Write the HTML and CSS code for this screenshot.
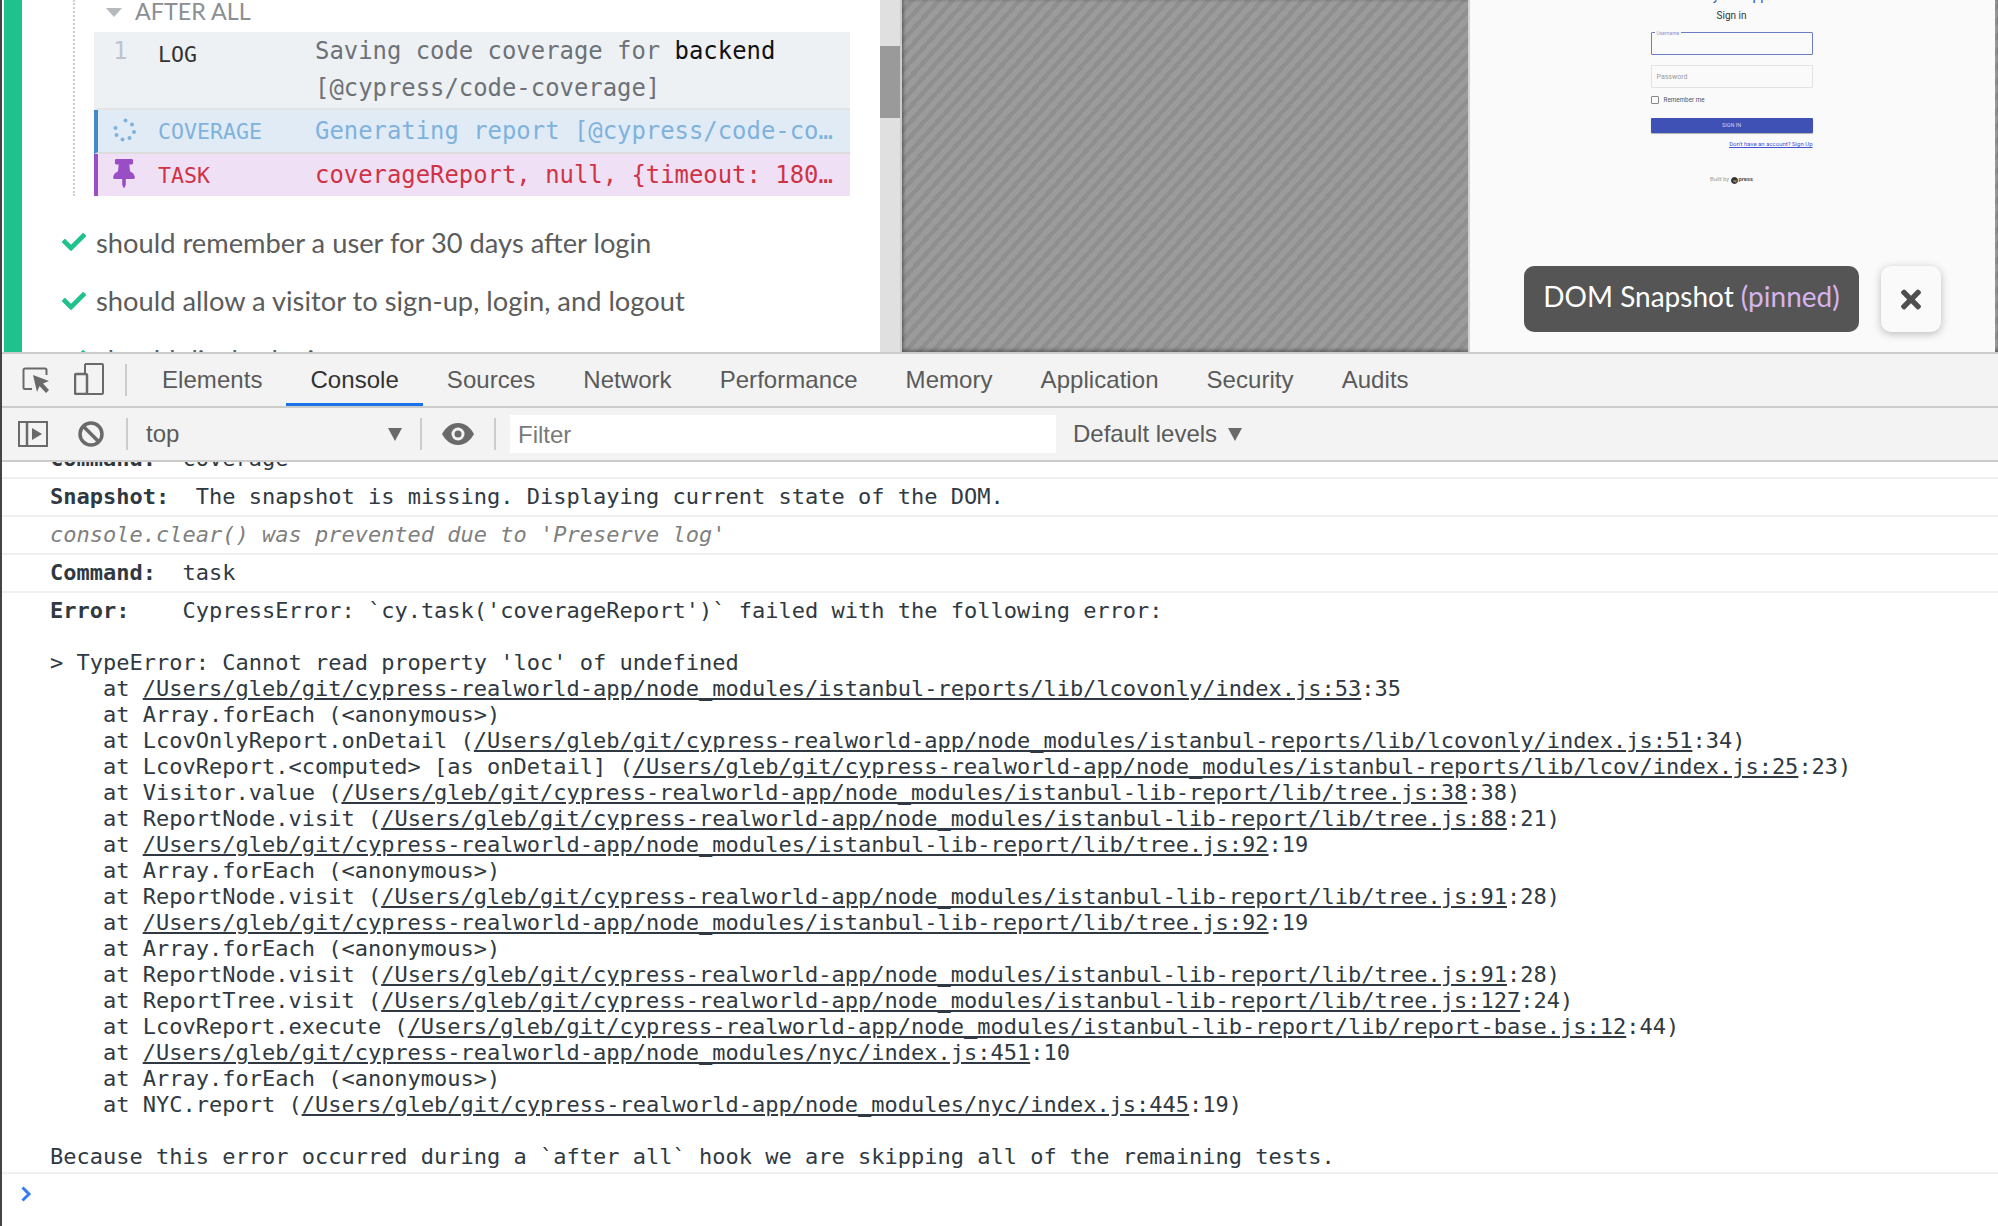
FILE: index.html
```html
<!DOCTYPE html>
<html lang="en">
<head>
<meta charset="utf-8">
<title>Cypress runner with DevTools console</title>
<link rel="stylesheet" href="styles.css">
</head>
<body>
<div class="app">
  <section class="top">
    <div class="reporter">
      <div class="stripe"></div>
      <div class="runnables">
        <div class="hook">
          <div class="hook-head"><span class="caret"></span><span class="hook-name">AFTER ALL</span></div>
          <div class="cmd cmd-log">
            <span class="cmd-num">1</span>
            <span class="cmd-label">LOG</span>
            <span class="cmd-msg wrap">Saving code coverage for <b>backend</b><br>[@cypress/code-coverage]</span>
          </div>
          <div class="cmd cmd-cov">
            <span class="cmd-num">
              <svg class="spin" viewBox="0 0 24 24" width="24" height="24"><g fill="#7fb2dd"><circle cx="12.5" cy="2.5" r="2"/><circle cx="19" cy="6.5" r="2"/><circle cx="21" cy="14" r="2"/><circle cx="16.5" cy="20" r="2"/><circle cx="9.5" cy="21.5" r="2"/><circle cx="3.5" cy="17" r="2"/><circle cx="2.5" cy="10" r="2"/></g></svg>
            </span>
            <span class="cmd-label">COVERAGE</span>
            <span class="cmd-msg">Generating report [@cypress/code-coverage]</span>
          </div>
          <div class="cmd cmd-task">
            <span class="cmd-num">
              <svg class="pin" viewBox="0 0 384 512" width="22" height="29"><path fill="#9a4ec5" d="M298.028 214.267L285.793 96H328c13.255 0 24-10.745 24-24V24c0-13.255-10.745-24-24-24H56C42.745 0 32 10.745 32 24v48c0 13.255 10.745 24 24 24h42.207L85.972 214.267C37.465 236.82 0 277.261 0 328c0 13.255 10.745 24 24 24h136v104.007c0 1.242.289 2.467.845 3.578l24 48c2.941 5.882 11.364 5.893 14.311 0l24-48a8.008 8.008 0 0 0 .845-3.578V352h136c13.255 0 24-10.745 24-24-.001-51.183-37.983-91.42-85.973-113.733z"/></svg>
            </span>
            <span class="cmd-label">TASK</span>
            <span class="cmd-msg">coverageReport, null, {timeout: 180000}</span>
          </div>
        </div>
        <div class="test"><svg class="tick" viewBox="0 0 512 512" width="24" height="24"><path fill="#1fc28d" d="M173.898 439.404l-166.4-166.4c-9.997-9.997-9.997-26.206 0-36.204l36.203-36.204c9.997-9.998 26.207-9.998 36.204 0L192 312.69 432.095 72.596c9.997-9.997 26.207-9.997 36.204 0l36.203 36.204c9.997 9.997 9.997 26.206 0 36.204l-294.4 294.401c-9.998 9.997-26.207 9.997-36.204-.001z"/></svg><span>should remember a user for 30 days after login</span></div>
        <div class="test"><svg class="tick" viewBox="0 0 512 512" width="24" height="24"><path fill="#1fc28d" d="M173.898 439.404l-166.4-166.4c-9.997-9.997-9.997-26.206 0-36.204l36.203-36.204c9.997-9.998 26.207-9.998 36.204 0L192 312.69 432.095 72.596c9.997-9.997 26.207-9.997 36.204 0l36.203 36.204c9.997 9.997 9.997 26.206 0 36.204l-294.4 294.401c-9.998 9.997-26.207 9.997-36.204-.001z"/></svg><span>should allow a visitor to sign-up, login, and logout</span></div>
        <div class="test"><svg class="tick" viewBox="0 0 512 512" width="24" height="24"><path fill="#1fc28d" d="M173.898 439.404l-166.4-166.4c-9.997-9.997-9.997-26.206 0-36.204l36.203-36.204c9.997-9.998 26.207-9.998 36.204 0L192 312.69 432.095 72.596c9.997-9.997 26.207-9.997 36.204 0l36.203 36.204c9.997 9.997 9.997 26.206 0 36.204l-294.4 294.401c-9.998 9.997-26.207 9.997-36.204-.001z"/></svg><span>should display login errors</span></div>
      </div>
      <div class="scroll"><div class="thumb"></div></div>
    </div>
    <div class="stage">
      <div class="aut">
        <div class="aut-logo"><span>Pay BS App</span></div>
        <div class="aut-title">Sign in</div>
        <div class="aut-form">
          <div class="field field-focus"><span class="field-float">Username</span></div>
          <div class="field"><span class="field-hint">Password</span></div>
          <div class="remember"><span class="check-box"></span><span>Remember me</span></div>
          <div class="signin">SIGN IN</div>
          <div class="signup"><span>Don't have an account? Sign Up</span></div>
          <div class="built">Built by <span class="cy-ring">cy</span><span class="cy-word">press</span></div>
        </div>
        <div class="snap">
          <div class="snap-label">DOM Snapshot <span class="snap-pin">(pinned)</span></div>
          <div class="snap-close"><svg viewBox="0 0 352 512" width="20" height="29"><path fill="#4f4f4f" d="M242.72 256l100.07-100.07c12.28-12.28 12.28-32.19 0-44.48l-22.24-22.24c-12.28-12.28-32.19-12.28-44.48 0L176 189.28 75.93 89.21c-12.28-12.28-32.19-12.28-44.48 0L9.21 111.45c-12.28 12.28-12.28 32.19 0 44.48L109.28 256 9.21 356.07c-12.28 12.28-12.28 32.19 0 44.48l22.24 22.24c12.28 12.28 32.2 12.28 44.48 0L176 322.72l100.07 100.07c12.28 12.28 32.2 12.28 44.48 0l22.24-22.24c12.28-12.28 12.28-32.19 0-44.48L242.72 256z"/></svg></div>
        </div>
      </div>
    </div>
  </section>

  <section class="devtools">
    <div class="tabbar">
      <div class="tool-icons">
        <svg class="icon-inspect" viewBox="0 0 28 26" width="28" height="26"><path d="M10 22H3a1.500 1.500 0 0 1-1.500-1.500V3A1.500 1.500 0 0 1 3 1.500h20A1.500 1.500 0 0 1 24.500 3v5" fill="none" stroke="#6a6a6a" stroke-width="2"/><path fill="#6a6a6a" d="M11 8l16 6-6 2.500 6 6.500-3 3-6.500-7-2.500 6z"/></svg>
        <svg class="icon-device" viewBox="0 0 30 32" width="30" height="32"><path d="M11 1h17a1 1 0 0 1 1 1v28a1 1 0 0 1-1 1H13" fill="none" stroke="#6a6a6a" stroke-width="2"/><path d="M11 1v10" fill="none" stroke="#6a6a6a" stroke-width="2"/><rect x="1" y="11" width="12" height="20" rx="1.500" fill="none" stroke="#6a6a6a" stroke-width="2.500"/></svg>
      </div>
      <span class="vsep vsep-tools"></span>
      <nav class="tabs">
        <span class="tab">Elements</span>
        <span class="tab tab-active">Console</span>
        <span class="tab">Sources</span>
        <span class="tab">Network</span>
        <span class="tab">Performance</span>
        <span class="tab">Memory</span>
        <span class="tab">Application</span>
        <span class="tab">Security</span>
        <span class="tab">Audits</span>
      </nav>
    </div>
    <div class="consolebar">
      <svg class="icon-side" viewBox="0 0 30 26" width="30" height="26"><rect x="1" y="1" width="28" height="24" fill="none" stroke="#6a6a6a" stroke-width="2"/><path d="M9 1v24" stroke="#6a6a6a" stroke-width="2.500"/><path fill="#6a6a6a" d="M14 7l10 6-10 6z"/></svg>
      <svg class="icon-block" viewBox="0 0 26 26" width="26" height="26"><circle cx="13" cy="13" r="11" fill="none" stroke="#6a6a6a" stroke-width="3.500"/><path d="M5.500 5.500l15 15" stroke="#6a6a6a" stroke-width="3.500"/></svg>
      <span class="vsep vsep-block"></span>
      <div class="ctx"><span>top</span><span class="tri"></span></div>
      <span class="vsep"></span>
      <svg class="icon-eye" viewBox="0 0 32 22" width="32" height="22"><path fill="#6a6a6a" d="M16 0C9 0 3.500 4.500 0 11c3.500 6.500 9 11 16 11s12.500-4.500 16-11C28.500 4.500 23 0 16 0z"/><circle cx="16" cy="11" r="6.500" fill="#f3f3f3"/><circle cx="16" cy="11" r="3.500" fill="#6a6a6a"/></svg>
      <span class="vsep"></span>
      <div class="filter">Filter</div>
      <div class="levels"><span>Default levels</span><span class="tri"></span></div>
    </div>
    <div class="console">
      <div class="row row-clip"><b>Command:</b>  coverage</div>
      <div class="row"><b>Snapshot:</b>  The snapshot is missing. Displaying current state of the DOM.</div>
      <div class="row row-note">console.clear() was prevented due to 'Preserve log'</div>
      <div class="row"><b>Command:</b>  task</div>
      <div class="row row-long"><b>Error:</b>    CypressError: `cy.task('coverageReport')` failed with the following error:

&gt; TypeError: Cannot read property 'loc' of undefined
    at <a>/Users/gleb/git/cypress-realworld-app/node_modules/istanbul-reports/lib/lcovonly/index.js:53</a>:35
    at Array.forEach (&lt;anonymous&gt;)
    at LcovOnlyReport.onDetail (<a>/Users/gleb/git/cypress-realworld-app/node_modules/istanbul-reports/lib/lcovonly/index.js:51</a>:34)
    at LcovReport.&lt;computed&gt; [as onDetail] (<a>/Users/gleb/git/cypress-realworld-app/node_modules/istanbul-reports/lib/lcov/index.js:25</a>:23)
    at Visitor.value (<a>/Users/gleb/git/cypress-realworld-app/node_modules/istanbul-lib-report/lib/tree.js:38</a>:38)
    at ReportNode.visit (<a>/Users/gleb/git/cypress-realworld-app/node_modules/istanbul-lib-report/lib/tree.js:88</a>:21)
    at <a>/Users/gleb/git/cypress-realworld-app/node_modules/istanbul-lib-report/lib/tree.js:92</a>:19
    at Array.forEach (&lt;anonymous&gt;)
    at ReportNode.visit (<a>/Users/gleb/git/cypress-realworld-app/node_modules/istanbul-lib-report/lib/tree.js:91</a>:28)
    at <a>/Users/gleb/git/cypress-realworld-app/node_modules/istanbul-lib-report/lib/tree.js:92</a>:19
    at Array.forEach (&lt;anonymous&gt;)
    at ReportNode.visit (<a>/Users/gleb/git/cypress-realworld-app/node_modules/istanbul-lib-report/lib/tree.js:91</a>:28)
    at ReportTree.visit (<a>/Users/gleb/git/cypress-realworld-app/node_modules/istanbul-lib-report/lib/tree.js:127</a>:24)
    at LcovReport.execute (<a>/Users/gleb/git/cypress-realworld-app/node_modules/istanbul-lib-report/lib/report-base.js:12</a>:44)
    at <a>/Users/gleb/git/cypress-realworld-app/node_modules/nyc/index.js:451</a>:10
    at Array.forEach (&lt;anonymous&gt;)
    at NYC.report (<a>/Users/gleb/git/cypress-realworld-app/node_modules/nyc/index.js:445</a>:19)

Because this error occurred during a `after all` hook we are skipping all of the remaining tests.</div>
      <div class="prompt"><svg viewBox="0 0 12 16" width="12" height="16"><path d="M2.500 1.500L9 8l-6.500 6.500" fill="none" stroke="#367cf1" stroke-width="3"/></svg></div>
    </div>
  </section>
</div>
</body>
</html>
```
FILE: styles.css
```css
* { box-sizing: border-box; }
html, body { margin: 0; height: 100%; background: #fff; overflow: hidden; }

.app {
  width: 1998px;
  height: 1226px;
  display: flex;
  flex-direction: column;
  border-left: 2px solid #444;
  overflow: hidden;
}

/* ---------- top: Cypress runner ---------- */
.top {
  height: 354px;
  flex: none;
  display: flex;
  border-bottom: 2px solid #ccc;
  overflow: hidden;
}
.reporter {
  width: 900px;
  flex: none;
  display: flex;
  background: #fff;
  font-family: Lato, "Noto Sans", sans-serif;
}
.stripe {
  width: 18px;
  margin-left: 2px;
  flex: none;
  background: #1fc28d;
}
.runnables { flex: 1; min-width: 0; overflow: hidden; }
.scroll {
  width: 22px;
  flex: none;
  background: #e0e0e0;
  border-right: 2px solid #cdcdcd;
  padding-top: 46px;
}
.thumb { height: 72px; background: #9a9a9a; }

.hook {
  margin-left: 51px;
  padding-left: 19px;
  width: 780px;
  margin-bottom: 17px;
  border-left: 2px dotted #cfcfcf;
}
.hook-head { height: 32px; display: flex; align-items: center; }
.caret {
  width: 0;
  height: 0;
  margin-left: 12px;
  border-left: 8px solid transparent;
  border-right: 8px solid transparent;
  border-top: 9px solid #b5b9bd;
  margin-top: -8px;
}
.hook-name {
  margin-left: 13px;
  margin-top: -10px;
  font-size: 23.300px;
  color: #8c8f93;
}

.cmd {
  display: grid;
  grid-template-columns: 60px 157px 1fr;
  width: 756px;
  padding: 2px 16px 2px 0;
  border-left: 4px solid transparent;
  font-family: "DejaVu Sans Mono", monospace;
}
.cmd-log {
  background: #eef1f4;
  border-left-color: #eef1f4;
  padding: 0 16px 0 0;
  border-bottom: 2px solid #e3e3e3;
  height: 78px;
}
.cmd-cov {
  background: #e0ebf6;
  border-left-color: #428bca;
  color: #7fb2dd;
  height: 44px;
  border-bottom: 2px solid #dcdcdc;
}
.cmd-task {
  background: #efe0f5;
  border-left-color: #9a4ec5;
  color: #cf3345;
  height: 42px;
}
.cmd-num {
  font-size: 24px;
  line-height: 38px;
  color: #bcc3cf;
  padding-left: 15px;
  display: flex;
  align-items: flex-start;
}
.spin { margin-top: 6px; }
.pin { margin-top: 3px; }
.cmd-label {
  font-size: 21.600px;
  line-height: 40px;
  color: inherit;
}
.cmd-log .cmd-label { color: #333; line-height: 46px; }
.cmd-msg {
  font-size: 23.900px;
  line-height: 38px;
  white-space: nowrap;
  overflow: hidden;
  text-overflow: ellipsis;
  min-width: 0;
}
.cmd-log .cmd-msg { color: #6d7278; padding-top: 1px; line-height: 37px; }
.cmd-msg b { font-weight: 400; color: #111; }

.test {
  height: 58.500px;
  margin-left: 40px;
  display: flex;
  align-items: center;
  gap: 10px;
  font-size: 27.300px;
  color: #5c5c5c;
  white-space: nowrap;
}

/* ---------- top: application under test ---------- */
.stage {
  flex: 1;
  min-width: 0;
  display: flex;
  justify-content: flex-end;
  padding-right: 3px;
  background: repeating-linear-gradient(-48deg, #8f8f8f 0 4.500px, #9b9b9b 4.500px 10px);
  box-shadow: inset 2px 0 3px rgba(0,0,0,.25), inset 0 -3px 3px rgba(0,0,0,.2);
}
.aut {
  width: 527px;
  height: 100%;
  padding-right: 2px;
  position: relative;
  display: flex;
  flex-direction: column;
  align-items: center;
  background: #fafafa;
  border-left: 2px solid #d4d4d4;
  font-family: Roboto, "Liberation Sans", sans-serif;
  color: #333;
}
.aut-logo {
  height: 3px;
  overflow: hidden;
  font-size: 14px;
  color: #3f51b5;
  margin-bottom: 6px;
  width: 70px;
  text-align: center;
  white-space: nowrap;
}
.aut-logo span { display: block; margin-top: -12px; line-height: 15px; }
.aut-title { font-size: 10px; line-height: 14px; }
.aut-form { width: 162px; margin-top: 9px; display: flex; flex-direction: column; }
.field {
  height: 23px;
  margin-bottom: 10px;
  border: 1px solid #e2e2e2;
  border-radius: 1px;
  display: flex;
  align-items: center;
  padding-left: 5px;
}
.field-focus { border-color: #6d7cc8; position: relative; }
.field-hint { font-size: 7px; color: #9a9a9a; }
.field-float {
  position: absolute;
  top: -3px;
  left: 3px;
  padding: 0 2px;
  font-size: 5px;
  line-height: 6px;
  color: #8a95d2;
  background: #fafafa;
}
.remember {
  height: 8px;
  margin-top: -2px;
  display: flex;
  align-items: center;
  gap: 5px;
  font-size: 6.300px;
  color: #555;
}
.check-box { width: 8px; height: 8px; border: 1px solid #888; border-radius: 1px; flex: none; }
.signin {
  height: 15px;
  margin-top: 14px;
  background: #3f51b5;
  border-radius: 1px;
  box-shadow: 0 1px 1px rgba(0,0,0,.3);
  color: #c9cff0;
  font-size: 5.500px;
  line-height: 15px;
  text-align: center;
}
.signup {
  margin-top: 8px;
  height: 6px;
  text-align: right;
  font-size: 6px;
  line-height: 6px;
  color: #3f51d5;
  text-decoration: underline;
  white-space: nowrap;
}
.built {
  margin-top: 28px;
  text-align: center;
  font-size: 5.800px;
  line-height: 8px;
  color: #999;
}
.cy-ring {
  display: inline-block;
  width: 7px;
  height: 7px;
  line-height: 6px;
  margin-left: 1px;
  border-radius: 50%;
  border: 1px solid #333;
  background: #333;
  color: #ddd;
  font-size: 3.500px;
  vertical-align: -1px;
}
.cy-word { color: #555; font-weight: 700; }

.snap {
  position: absolute;
  left: 54px;
  top: 266px;
  display: flex;
  gap: 22px;
  font-family: Lato, "Noto Sans", sans-serif;
}
.snap-label {
  width: 335px;
  height: 66px;
  background: #555;
  border-radius: 10px;
  color: #fff;
  font-size: 28px;
  line-height: 60px;
  text-align: center;
  white-space: nowrap;
}
.snap-pin { color: #d5b4ee; }
.snap-close {
  width: 60px;
  height: 66px;
  background: #fafafa;
  border-radius: 10px;
  box-shadow: 0 2px 8px rgba(0,0,0,.25);
  display: flex;
  align-items: center;
  justify-content: center;
}

/* ---------- devtools ---------- */
.devtools {
  flex: 1;
  min-height: 0;
  display: flex;
  flex-direction: column;
  font-family: "Liberation Sans", Arial, sans-serif;
  color: #5a5a5a;
}
.tabbar {
  height: 54px;
  flex: none;
  display: flex;
  align-items: center;
  background: #f3f3f3;
  border-bottom: 2px solid #ccc;
}
.tool-icons { display: flex; align-items: center; gap: 24px; padding-left: 20px; width: 123px; }
.icon-device { margin-top: -2px; }
.vsep { width: 2px; height: 32px; background: #ccc; flex: none; }
.tabs { display: flex; height: 52px; padding-left: 11px; }
.tab {
  padding: 0 24px;
  font-size: 24px;
  letter-spacing: .05px;
  line-height: 52px;
  color: #5a5a5a;
  white-space: nowrap;
}
.tab-active { color: #333; border-bottom: 3px solid #1a73e8; }

.consolebar {
  height: 54px;
  flex: none;
  display: flex;
  align-items: center;
  background: #f3f3f3;
  border-bottom: 2px solid #ccc;
  padding-left: 16px;
  font-size: 24px;
}
.icon-block { margin-left: 30px; }
.vsep-block { margin-left: 22px; }
.ctx {
  width: 292px;
  display: flex;
  align-items: center;
  justify-content: space-between;
  padding: 0 18px 0 18px;
  color: #5a5a5a;
}
.tri {
  width: 0;
  height: 0;
  border-left: 7px solid transparent;
  border-right: 7px solid transparent;
  border-top: 13px solid #6a6a6a;
}
.icon-eye { margin: 0 20px; }
.filter {
  width: 546px;
  height: 38px;
  margin-left: 14px;
  background: #fff;
  padding-left: 8px;
  line-height: 40px;
  color: #7a7a7a;
}
.levels { display: flex; align-items: center; gap: 11px; margin-left: 17px; color: #5a5a5a; }

.console {
  flex: 1;
  min-height: 0;
  overflow: hidden;
  background: #fff;
  font-family: "DejaVu Sans Mono", monospace;
  font-size: 22px;
  line-height: 26px;
  color: #303942;
}
.row {
  padding: 5px 0 5px 48px;
  border-bottom: 2px solid #f0f0f0;
  white-space: pre;
}
.row-clip { margin-top: -21px; }
.row-note { font-style: italic; color: #7f7f7f; }
.row-long { padding-bottom: 2px; }
.row a { color: inherit; text-decoration: underline; }
.prompt { padding: 12px 0 0 18px; }
.prompt svg { display: block; }
```
